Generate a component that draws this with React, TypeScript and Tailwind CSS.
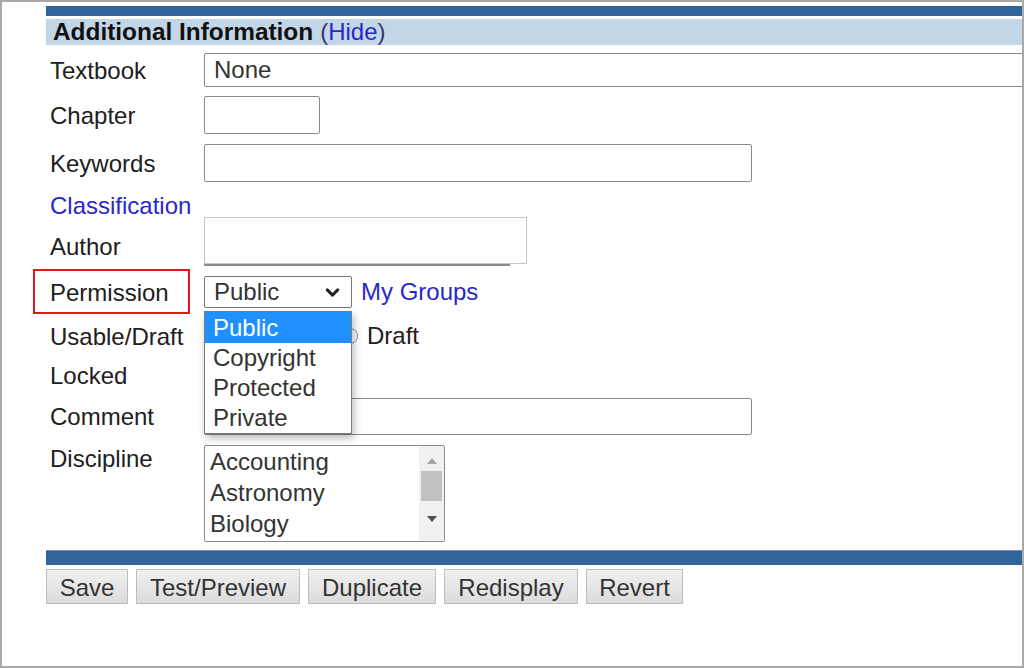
import { ChevronDown } from "lucide-react";

const FONT = "font-['Liberation_Sans',Arial,sans-serif]";
const LINK = "text-[#2828c8]";

const PERMISSIONS = ["Public", "Copyright", "Protected", "Private"];
const DISCIPLINES = ["Accounting", "Astronomy", "Biology"];
const BUTTONS = [
  { label: "Save", w: "w-[82px]" },
  { label: "Test/Preview", w: "w-[164px]" },
  { label: "Duplicate", w: "w-[128px]" },
  { label: "Redisplay", w: "w-[134px]" },
  { label: "Revert", w: "w-[97px]" },
];

function Label({ children }: { children: React.ReactNode }) {
  return <div className="w-[158px] shrink-0 pl-[4px] leading-[27px]">{children}</div>;
}

function TextBox({ w, h }: { w: string; h: string }) {
  return <div className={`${w} ${h} shrink-0 rounded-[2px] border border-[#8a8a8a] bg-white`} />;
}

export default function App() {
  return (
    <div
      className={`${FONT} h-[668px] w-[1024px] overflow-hidden border-2 border-[#a9a9a9] bg-white pl-[44px] pt-[4px] text-[24px] text-[#202020]`}
    >
      <div className="w-[1000px]">
        {/* section header */}
        <div className="h-[10px] bg-[#31659a]" />
        <div className="mt-[3px] flex h-[26px] items-center bg-[#c2d6e7] pl-[7px] leading-none">
          <span className="text-[24.4px] font-bold text-[#111]">Additional Information</span>
          <span className="ml-[7px] text-[#3b3470]">
            (<span className={LINK}>Hide</span>)
          </span>
        </div>

        {/* Textbook */}
        <div className="mt-[8px] flex h-[34px] items-center">
          <Label>Textbook</Label>
          <div className="flex h-[34px] w-[840px] shrink-0 items-center rounded-[2px] border border-[#8a8a8a] pl-[9px] text-[#333]">
            None
          </div>
        </div>

        {/* Chapter */}
        <div className="mt-[9px] flex h-[38px] items-center">
          <Label>Chapter</Label>
          <TextBox w="w-[116px]" h="h-[38px]" />
        </div>

        {/* Keywords */}
        <div className="mt-[10px] flex h-[38px] items-center">
          <Label>Keywords</Label>
          <TextBox w="w-[548px]" h="h-[38px]" />
        </div>

        {/* Classification */}
        <div className="h-[35px] pt-[10px]">
          <div className={`pl-[4px] leading-[27px] ${LINK}`}>Classification</div>
        </div>

        {/* Author */}
        <div className="flex h-[48px] items-end">
          <div className="w-[158px] shrink-0 pb-[5px] pl-[4px] leading-[27px]">Author</div>
          <div className="flex flex-col self-start">
            <div className="h-[47px] w-[323px] border border-[#c6c6c6] bg-white" />
            <div className="h-[2px] w-[306px] bg-[#8c8c8c]" />
          </div>
        </div>

        {/* Permission */}
        <div className="mt-[11px] flex h-[32px] items-center">
          <div className="relative w-[158px] shrink-0 pl-[4px] leading-[27px]">
            Permission
            <div className="absolute left-[-13px] top-[-10px] h-[45px] w-[157px] border-2 border-[#e8141a]" />
          </div>
          <div className="relative">
            <div className="flex h-[32px] w-[148px] items-center justify-between rounded-[2px] border border-[#767676] bg-white pl-[9px] pr-[8px] text-[#333]">
              Public
              <ChevronDown size={21} strokeWidth={3.4} className="text-[#222]" />
            </div>
            <div className="absolute left-0 top-[35px] z-10 w-[148px] border border-[#7a7a7a] bg-white shadow-[2px_4px_8px_rgba(0,0,0,0.28)]">
              {PERMISSIONS.map((p, i) => (
                <div
                  key={p}
                  className={`pl-[8px] ${i === 0 ? "h-[31px] bg-[#1e90ff] leading-[31px] text-white" : "h-[30px] leading-[30px] text-[#333]"}`}
                >
                  {p}
                </div>
              ))}
            </div>
          </div>
          <span className={`ml-[9px] ${LINK}`}>My Groups</span>
        </div>

        {/* Usable / Draft (the "Usable" option sits under the open list) */}
        <div className="mt-[12px] flex h-[32px] items-center">
          <Label>Usable/Draft</Label>
          <div className="flex w-[138px] items-center">
            <div className="ml-[2px] h-[16px] w-[16px] rounded-full border border-[#777]" />
          </div>
          <div className="h-[16px] w-[16px] rounded-full border border-[#8a8a8a]" />
          <span className="ml-[9px]">Draft</span>
        </div>

        {/* Locked */}
        <div className="mt-[8px] flex h-[30px] items-center">
          <Label>Locked</Label>
          <div className="ml-[2px] h-[16px] w-[16px] rounded-[2px] border border-[#777]" />
        </div>

        {/* Comment */}
        <div className="mt-[8px] flex h-[37px] items-center">
          <Label>Comment</Label>
          <TextBox w="w-[548px]" h="h-[37px]" />
        </div>

        {/* Discipline */}
        <div className="mt-[10px] flex h-[97px] items-start">
          <Label>Discipline</Label>
          <div className="flex h-[97px] w-[241px] shrink-0 overflow-hidden rounded-[2px] border border-[#8a8a8a] bg-white">
            <div className="flex-1 pl-[5px] text-[#333]">
              {DISCIPLINES.map((d) => (
                <div key={d} className="h-[31px] leading-[31px]">
                  {d}
                </div>
              ))}
            </div>
            <div className="flex w-[25px] flex-col items-center bg-[#f1f1f1] px-[2px]">
              <svg width="12" height="8" viewBox="0 0 12 8" className="mt-[11px]">
                <path d="M1 7 L6 1 L11 7 Z" fill="#a3a3a3" />
              </svg>
              <div className="mt-[6px] h-[30px] w-[21px] bg-[#c1c1c1]" />
              <svg width="12" height="8" viewBox="0 0 12 8" className="mt-[14px]">
                <path d="M1 1 L6 7 L11 1 Z" fill="#505050" />
              </svg>
            </div>
          </div>
        </div>

        {/* footer */}
        <div className="mt-[8px] h-[15px] border-t border-[#6f93b8] bg-[#31659a]" />
        <div className="mt-[4px] flex gap-[8px]">
          {BUTTONS.map((b) => (
            <button
              key={b.label}
              className={`${b.w} h-[35px] shrink-0 border border-[#bdbdbd] bg-gradient-to-b from-[#f0f0f0] to-[#dcdcdc] text-center text-[#333]`}
            >
              {b.label}
            </button>
          ))}
        </div>
      </div>
    </div>
  );
}
